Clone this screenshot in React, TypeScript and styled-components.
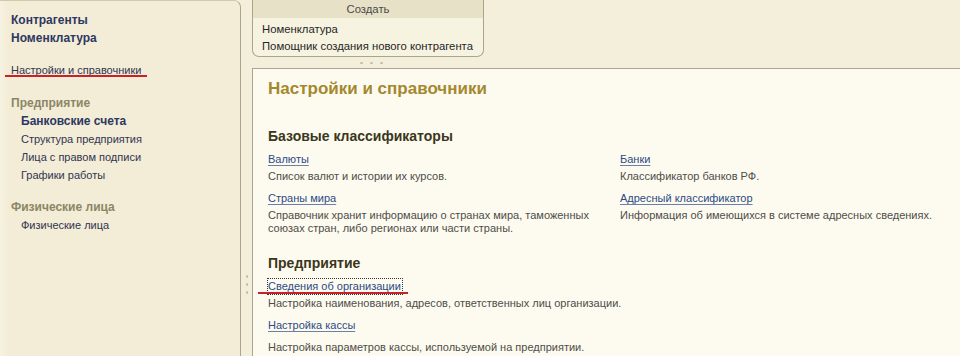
import React from "react";
import styled, { createGlobalStyle } from "styled-components";

const GlobalStyle = createGlobalStyle`
  html, body { margin: 0; padding: 0; }
  body {
    background: #f4efdb;
    font-family: Tahoma, "Liberation Sans", Arial, sans-serif;
    font-size: 11px;
    color: #333;
  }
`;

const Page = styled.div`
  display: flex;
  height: 356px;
  width: 960px;
  overflow: hidden;
  background: #f4efdb;
`;

const Sidebar = styled.nav`
  width: 241px;
  flex: none;
  box-sizing: border-box;
  background: linear-gradient(90deg, #f7f3e2 0, #f3ecd6 8px, #f3ecd6 100%);
  border-right: 1px solid #a9a58e;
  border-top: 1px solid #cfc9b0;
  border-top-right-radius: 7px;
  padding: 10px 0 0 11px;
  display: flex;
  flex-direction: column;
`;

const NavLink = styled.div<{ $bold?: boolean; $indent?: boolean }>`
  position: relative;
  height: 18px;
  line-height: 18px;
  padding-left: ${(p) => (p.$indent ? "10px" : "0")};
  font-weight: ${(p) => (p.$bold ? 700 : 400)};
  font-size: ${(p) => (p.$bold ? "12px" : "11px")};
  color: ${(p) => (p.$bold ? "#2d3761" : "#2f3552")};
  white-space: nowrap;
`;

const GroupTitle = styled.div<{ $top: number }>`
  height: 18px;
  line-height: 18px;
  margin-top: ${(p) => p.$top}px;
  font-weight: 700;
  font-size: 12px;
  color: #8b8766;
`;

const Gap = styled.div<{ $h: number }>`
  height: ${(p) => p.$h}px;
`;

const RedMark = styled.span<{ $w: number; $left: number; $top: number }>`
  position: absolute;
  left: ${(p) => p.$left}px;
  top: ${(p) => p.$top}px;
  width: ${(p) => p.$w}px;
  height: 2px;
  background: #c9202a;
`;

const VSplitter = styled.div`
  width: 11px;
  flex: none;
  display: flex;
  flex-direction: column;
  align-items: center;
  padding-top: 275px;
  gap: 5px;
  box-sizing: border-box;
`;

const Grip = styled.span`
  width: 2px;
  height: 3px;
  background: #c4bfa6;
  border-radius: 1px;
`;

const RightCol = styled.div`
  flex: 1;
  display: flex;
  flex-direction: column;
  min-width: 0;
`;

const TopArea = styled.div`
  height: 57px;
  flex: none;
  display: flex;
`;

const CreatePanel = styled.div`
  width: 232px;
  box-sizing: border-box;
  border: 1px solid #a9a58e;
  border-top: none;
  border-radius: 0 0 7px 7px;
  background: #f7f3e1;
  overflow: hidden;
`;

const CreateHeader = styled.div`
  height: 18px;
  line-height: 18px;
  text-align: center;
  background: #e7e1c8;
  color: #4a4a48;
  font-size: 11.3px;
`;

const CreateList = styled.div`
  display: flex;
  flex-direction: column;
  padding-top: 3px;
`;

const CreateItem = styled.div`
  height: 17px;
  line-height: 17px;
  padding-left: 9px;
  color: #262626;
  font-size: 11.3px;
  white-space: nowrap;
`;

const HSplitter = styled.div`
  height: 11px;
  flex: none;
  display: flex;
  align-items: center;
  padding-left: 108px;
  gap: 7px;
`;

const HGrip = styled.span`
  width: 3px;
  height: 2px;
  background: #c4bfa6;
  border-radius: 1px;
`;

const Main = styled.main`
  flex: 1;
  background: #fdfbef;
  border-top: 1px solid #a9a58e;
  border-left: 1px solid #a9a58e;
  padding: 9px 0 0 15px;
  box-sizing: border-box;
`;

const Title = styled.h1`
  margin: 0;
  height: 22px;
  line-height: 22px;
  font-size: 17px;
  font-weight: 700;
  color: #a4882f;
`;

const SectionTitle = styled.h2<{ $top: number }>`
  margin: ${(p) => p.$top}px 0 0 0;
  height: 20px;
  line-height: 20px;
  font-size: 14px;
  font-weight: 700;
  color: #3b3620;
`;

const Columns = styled.div`
  display: grid;
  grid-template-columns: 352px 1fr;
`;

const Column = styled.div`
  display: flex;
  flex-direction: column;
`;

const Item = styled.div`
  display: flex;
  flex-direction: column;
  margin-top: 8px;
  &:first-child {
    margin-top: 6px;
  }
`;

const Link = styled.a<{ $focus?: boolean }>`
  position: relative;
  align-self: flex-start;
  height: 15px;
  line-height: 15px;
  font-size: 11px;
  color: #2c4a86;
  text-decoration: underline;
  text-underline-offset: 2px;
  text-decoration-color: #6c7fa8;
  cursor: pointer;
  outline: ${(p) => (p.$focus ? "1px dotted #333" : "none")};
  outline-offset: 0;
  padding: 0 1px 0 0;
`;

const Desc = styled.div<{ $w?: number; $top?: number }>`
  line-height: 13px;
  margin-top: ${(p) => p.$top ?? 3}px;
  font-size: 11px;
  color: #4d4d4a;
  width: ${(p) => p.$w ?? 330}px;
`;

const Section = styled.section`
  display: flex;
  flex-direction: column;
`;

const App: React.FC = () => (
  <>
    <GlobalStyle />
    <Page>
      <Sidebar>
        <NavLink $bold>Контрагенты</NavLink>
        <NavLink $bold>Номенклатура</NavLink>
        <Gap $h={14} />
        <NavLink>
          Настройки и справочники
          <RedMark $w={142} $left={-6} $top={14} />
        </NavLink>
        <GroupTitle $top={15}>Предприятие</GroupTitle>
        <NavLink $bold $indent>Банковские счета</NavLink>
        <NavLink $indent>Структура предприятия</NavLink>
        <NavLink $indent>Лица с правом подписи</NavLink>
        <NavLink $indent>Графики работы</NavLink>
        <GroupTitle $top={14}>Физические лица</GroupTitle>
        <NavLink $indent>Физические лица</NavLink>
      </Sidebar>
      <VSplitter>
        <Grip />
        <Grip />
        <Grip />
      </VSplitter>
      <RightCol>
        <TopArea>
          <CreatePanel>
            <CreateHeader>Создать</CreateHeader>
            <CreateList>
              <CreateItem>Номенклатура</CreateItem>
              <CreateItem>Помощник создания нового контрагента</CreateItem>
            </CreateList>
          </CreatePanel>
        </TopArea>
        <HSplitter>
          <HGrip />
          <HGrip />
          <HGrip />
        </HSplitter>
        <Main>
          <Title>Настройки и справочники</Title>
          <SectionTitle $top={26}>Базовые классификаторы</SectionTitle>
          <Columns>
            <Column>
              <Item>
                <Link>Валюты</Link>
                <Desc>Список валют и истории их курсов.</Desc>
              </Item>
              <Item>
                <Link>Страны мира</Link>
                <Desc>
                  Справочник хранит информацию о странах мира, таможенных союзах стран, либо регионах или части страны.
                </Desc>
              </Item>
            </Column>
            <Column>
              <Item>
                <Link>Банки</Link>
                <Desc>Классификатор банков РФ.</Desc>
              </Item>
              <Item>
                <Link>Адресный классификатор</Link>
                <Desc $w={340}>Информация об имеющихся в системе адресных сведениях.</Desc>
              </Item>
            </Column>
          </Columns>
          <SectionTitle $top={18}>Предприятие</SectionTitle>
          <Section>
            <Item>
              <Link $focus>
                Сведения об организации
                <RedMark $w={150} $left={-10} $top={13} />
              </Link>
              <Desc $w={500}>Настройка наименования, адресов, ответственных лиц организации.</Desc>
            </Item>
            <Item>
              <Link>Настройка кассы</Link>
              <Desc $w={500} $top={8}>Настройка параметров кассы, используемой на предприятии.</Desc>
            </Item>
          </Section>
        </Main>
      </RightCol>
    </Page>
  </>
);

export default App;
